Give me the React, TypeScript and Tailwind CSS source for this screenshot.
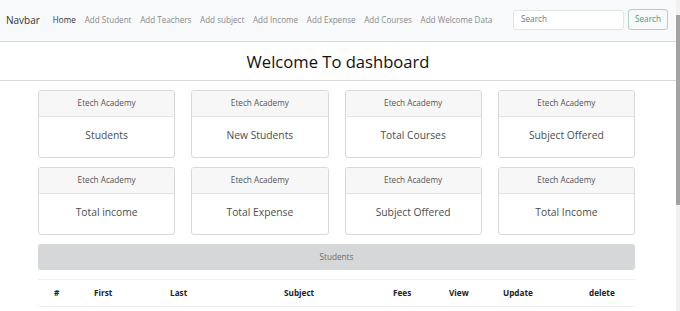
import React from "react";

const links = ["Add Student", "Add Teachers", "Add subject", "Add Income", "Add Expense", "Add Courses", "Add Welcome Data"];
const cards = [
  "Students",
  "New Students",
  "Total Courses",
  "Subject Offered",
  "Total income",
  "Total Expense",
  "Subject Offered",
  "Total Income",
];
const cols: { label: string; w: string; pl: string }[] = [
  { label: "#", w: "w-[51px]", pl: "pl-[16px]" },
  { label: "First", w: "w-[76px]", pl: "pl-[5px]" },
  { label: "Last", w: "w-[114px]", pl: "pl-[5px]" },
  { label: "Subject", w: "w-[109px]", pl: "pl-[5px]" },
  { label: "Fees", w: "w-[56px]", pl: "pl-[5px]" },
  { label: "View", w: "w-[54px]", pl: "pl-[5px]" },
  { label: "Update", w: "w-[86px]", pl: "pl-[5px]" },
  { label: "delete", w: "w-[51px]", pl: "pl-[5px]" },
];

export default function App() {
  return (
    <div className="flex w-[680px] h-[311px] overflow-hidden bg-white font-['Open_Sans',sans-serif]">
      <div className="flex-1 min-w-0 flex flex-col">
        <nav className="h-[42px] shrink-0 bg-[#f8f9fa] border-b border-[#d9d9d9] flex items-center pl-[6px] pr-[8px]">
          <span className="text-[10px] text-[#333] mr-[13px]">Navbar</span>
          <span className="text-[8.1px] text-[#333] mr-[9px]">Home</span>
          {links.map((l) => (
            <span key={l} className="text-[8.1px] text-[#8a8a8a] mr-[8.7px]">
              {l}
            </span>
          ))}
          <div className="ml-auto flex items-center gap-[4px] -mt-[2px]">
            <div className="w-[111px] h-[20px] border border-[#e3e3e3] rounded-[3px] bg-white flex items-center pl-[7px] text-[8.2px] text-[#777]">
              Search
            </div>
            <div className="w-[40px] h-[21px] border border-[#a8d5bf] rounded-[3px] flex items-center justify-center text-[8.2px] text-[#3f9f70]">
              Search
            </div>
          </div>
        </nav>
        <div className="h-[39px] shrink-0 flex items-center justify-center pt-[2px] border-b border-[#d9d9d9] text-[16.6px] text-[#111]">
          Welcome To dashboard
        </div>
        <div className="w-[597px] ml-[38px] pt-[9px] flex flex-col">
          <div className="grid grid-cols-4 gap-x-[16px] gap-y-[9px]">
            {cards.map((c, i) => (
              <div key={i} className="h-[68px] border border-[#d9d9d9] rounded-[3px] flex flex-col overflow-hidden">
                <div className="h-[26px] shrink-0 bg-[#f7f7f7] border-b border-[#e2e2e2] flex items-center justify-center text-[8.2px] text-[#555]">
                  Etech Academy
                </div>
                <div className="flex-1 flex items-center justify-center pb-[2px] text-[10.3px] text-[#4d4d4d]">{c}</div>
              </div>
            ))}
          </div>
          <div className="mt-[9px] h-[26px] rounded-[3px] bg-[#d6d7d8] flex items-center justify-center text-[8.2px] text-[#6c6c6c]">
            Students
          </div>
          <div className="mt-[9px] h-[28px] border-t border-[#f0f0f0] border-b border-[#dcdcdc] flex items-center">
            {cols.map((c) => (
              <div key={c.label} className={`${c.w} ${c.pl} shrink-0 text-[8.2px] font-bold text-[#222]`}>
                {c.label}
              </div>
            ))}
          </div>
        </div>
      </div>
      <div className="w-[4px] shrink-0 bg-[#f1f1f1] flex flex-col">
        <div className="mt-[15px] h-[190px] bg-[#a3a3a3]" />
      </div>
    </div>
  );
}
